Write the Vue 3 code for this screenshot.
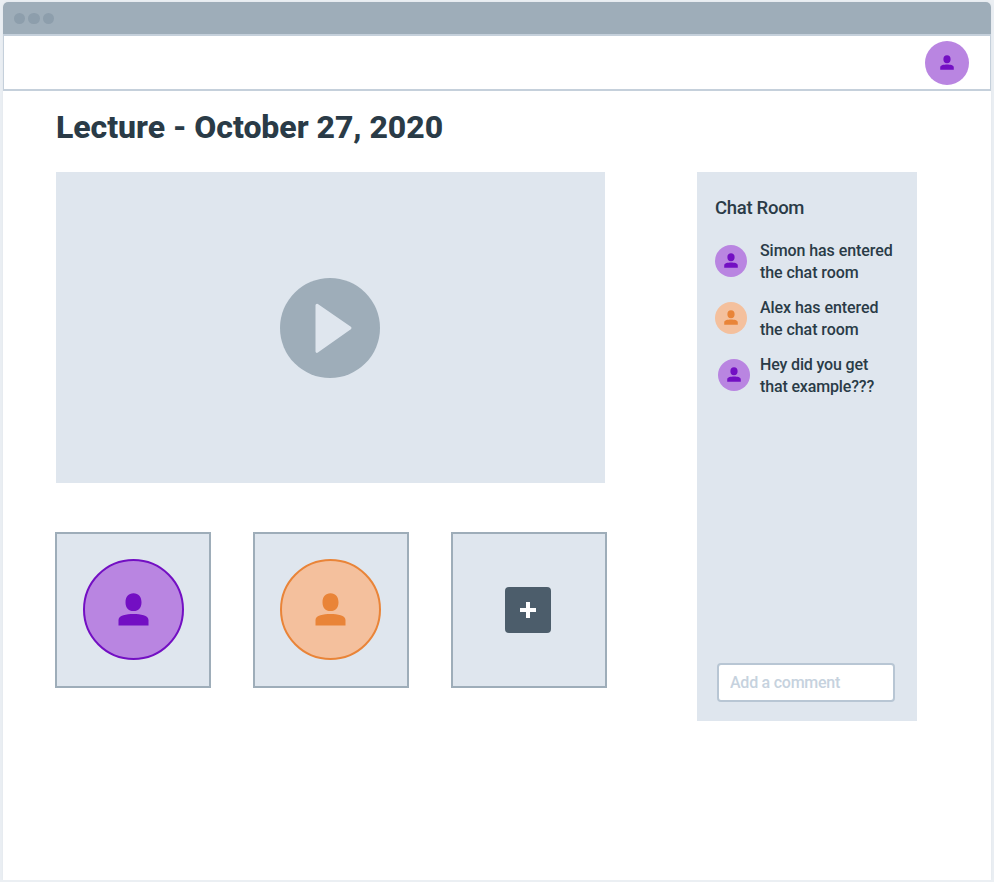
<template>
  <div class="browser">
    <div class="title-bar">
      <span class="dot" v-for="n in 3" :key="n"></span>
    </div>

    <header class="top-nav">
      <div class="avatar avatar-medium purple">
        <svg viewBox="0 0 31 33"><path :d="userIcon" /></svg>
      </div>
    </header>

    <h1>Lecture - October 27, 2020</h1>

    <main class="content">
      <div class="stage">
        <div class="video">
          <svg class="play" viewBox="0 0 100 100">
            <circle cx="50" cy="50" r="50" />
            <path d="M37 27.2 L70 50 L37 73.3 Z" />
          </svg>
        </div>

        <div class="participants">
          <div class="card" :class="'card-' + person.color" v-for="person in participants" :key="person.color">
            <div class="avatar avatar-large" :class="person.color">
              <svg viewBox="0 0 31 33"><path :d="userIcon" /></svg>
            </div>
          </div>
          <div class="card card-add">
            <button type="button" class="add">
              <svg viewBox="0 0 16 16"><path d="M6 0h4v6h6v4h-6v6H6v-6H0V6h6z" /></svg>
            </button>
          </div>
        </div>
      </div>

      <aside class="chat">
        <h2>Chat Room</h2>
        <ul class="messages">
          <li v-for="(message, i) in messages" :key="i" :class="{ comment: message.comment }">
            <div class="avatar avatar-small" :class="message.color">
              <svg viewBox="0 0 31 33"><path :d="userIcon" /></svg>
            </div>
            <p><span v-for="line in message.lines" :key="line">{{ line }}</span></p>
          </li>
        </ul>
        <input type="text" v-model="draft" placeholder="Add a comment">
      </aside>
    </main>
  </div>
</template>

<script setup>
import { ref } from 'vue';

const draft = ref('');

// Head and shoulders, shared by every avatar
const userIcon = 'M15.5 0.3C20.6 0.3 23.5 3.8 23.5 9.2C23.5 14.6 20.6 18.1 15.5 18.1C10.4 18.1 7.5 14.6 7.5 9.2C7.5 3.8 10.4 0.3 15.5 0.3Z M0.5 32.5V27C0.5 22.4 8.5 21 15.5 21C22.5 21 30.5 22.4 30.5 27V32.5Z';

const participants = [
    { color: 'purple' },
    { color: 'orange' },
];

const messages = [
    { color: 'purple', lines: ['Simon has entered', 'the chat room'] },
    { color: 'orange', lines: ['Alex has entered', 'the chat room'] },
    { color: 'purple', lines: ['Hey did you get', 'that example???'], comment: true },
];
</script>

<style>
body { background-color: #ebeff3; }
</style>

<style scoped>
.browser {
    box-sizing: border-box;
    width: 988px;
    height: 878px;
    margin: 2px 3px 0;
    background-color: #fff;
    border-radius: 5px 5px 0 0;
    box-shadow: 0 0 3px #dfe5eb;
    font-family: Roboto, "Liberation Sans", sans-serif;
    color: #2a3b47;
    display: flow-root;
}
.title-bar {
    display: flex;
    gap: 3.4px;
    box-sizing: border-box;
    height: 32px;
    padding: 10.5px 10.8px 0;
    border-radius: 5px 5px 0 0;
    background-color: #9eadb9;
}
.dot { width: 11.3px; height: 11.3px; border-radius: 50%; background-color: #8d9eac; }
.top-nav {
    display: flex;
    justify-content: flex-end;
    box-sizing: border-box;
    height: 57px;
    padding: 4.5px 21px 0 0;
    border: 1px solid #c5d0db;
    border-width: 2px 1px;
}
.avatar {
    display: flex;
    align-items: center;
    justify-content: center;
    box-sizing: border-box;
    flex: none;
    border-radius: 50%;
}
.purple { background-color: #b985e1; fill: #730fc3; border-color: #730fc3; }
.orange { background-color: #f4c09d; fill: #e98438; border-color: #e98438; }
.avatar-medium { width: 44px; height: 44px; }
.avatar-small { width: 32px; height: 32px; }
.avatar-medium svg, .avatar-small svg { width: 14px; height: 15px; }
.avatar-small svg { margin: 0 1px 1px 0; }
.avatar-large { width: 101px; height: 101px; border-width: 2px; border-style: solid; }
.avatar-large svg { width: 31px; height: 33px; }

h1 {
    margin: 16px 0 0 53px;
    font-size: 32px;
    line-height: 40px;
    font-weight: 800;
    letter-spacing: -0.04px;
}
.content {
    display: flex;
    justify-content: space-between;
    width: 862px;
    margin: 25px 0 0 52px;
}
.stage { width: 552px; }
.video {
    display: flex;
    align-items: center;
    justify-content: center;
    box-sizing: border-box;
    width: 549px;
    height: 311px;
    margin-left: 1px;
    padding-right: 1px;
    background-color: #dfe6ee;
}
.play { width: 100px; height: 100px; fill: #9eadb9; }
.play path { fill: #dfe6ee; stroke: #dfe6ee; stroke-width: 3; stroke-linejoin: round; }
.participants { display: flex; justify-content: space-between; margin-top: 49px; }
.card {
    display: flex;
    align-items: center;
    justify-content: center;
    box-sizing: border-box;
    width: 156px;
    height: 156px;
    padding-bottom: 2px;
    border: 2px solid #9eadb9;
    background-color: #dfe6ee;
}
.card-orange { padding-right: 2px; }
.card-add { padding: 0 2px 0 0; }
.add {
    display: flex;
    align-items: center;
    justify-content: center;
    width: 46px;
    height: 46px;
    padding: 0;
    border: 0;
    border-radius: 4px;
    background-color: #4c5d6b;
}
.add svg { width: 16px; height: 16px; fill: #fff; }

.chat {
    display: flex;
    flex-direction: column;
    box-sizing: border-box;
    width: 220px;
    height: 549px;
    padding: 24px 18px 19px;
    background-color: #dfe6ee;
}
h2 { margin: 0; font-size: 18.5px; line-height: 25px; font-weight: 500; letter-spacing: -0.3px; }
.messages { flex: 1; margin: 18px 0 0; padding: 0; list-style: none; }
.messages li { display: flex; align-items: center; gap: 13px; height: 44px; margin-bottom: 13px; }
.messages .comment { gap: 10px; padding-left: 3px; }
p { margin: 0; padding-top: 2px; font-size: 16px; line-height: 22px; font-weight: 500; letter-spacing: -0.07px; white-space: nowrap; }
p span { display: block; }
.comment p { letter-spacing: -0.15px; }
input {
    box-sizing: border-box;
    width: 178px;
    height: 39px;
    margin-left: 2px;
    padding: 0 11px;
    border: 2px solid #b8c6d4;
    border-radius: 4px;
    background-color: #fff;
    font-family: inherit;
    font-size: 16px;
    font-weight: 500;
    letter-spacing: -0.25px;
}
input::placeholder { color: #c6d2de; opacity: 1; }
</style>
